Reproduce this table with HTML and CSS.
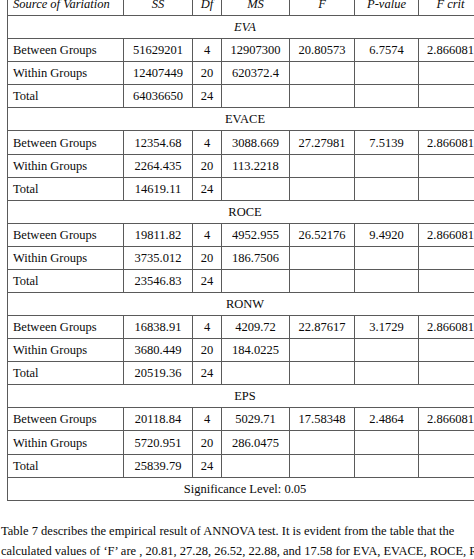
FILE: index.html
```html
<!DOCTYPE html>
<html>
<head>
<meta charset="utf-8">
<link rel="stylesheet" href="styles.css">
</head>
<body>
<div class="page">
  <table class="anova">
    <colgroup>
      <col class="c-src"><col class="c-ss"><col class="c-df"><col class="c-ms"><col class="c-f"><col class="c-p"><col class="c-fc">
    </colgroup>
    <thead>
      <tr class="head">
        <th class="src">Source of Variation</th><th>SS</th><th>Df</th><th>MS</th><th>F</th><th>P-value</th><th>F crit</th>
      </tr>
    </thead>
    <tbody>
      <tr><td colspan="7" class="sect it">EVA</td></tr>
      <tr><td class="src">Between Groups</td><td>51629201</td><td>4</td><td>12907300</td><td>20.80573</td><td>6.7574</td><td>2.866081</td></tr>
      <tr><td class="src">Within Groups</td><td>12407449</td><td>20</td><td>620372.4</td><td></td><td></td><td></td></tr>
      <tr><td class="src">Total</td><td>64036650</td><td>24</td><td></td><td></td><td></td><td></td></tr>

      <tr><td colspan="7" class="sect">EVACE</td></tr>
      <tr><td class="src">Between Groups</td><td>12354.68</td><td>4</td><td>3088.669</td><td>27.27981</td><td>7.5139</td><td>2.866081</td></tr>
      <tr><td class="src">Within Groups</td><td>2264.435</td><td>20</td><td>113.2218</td><td></td><td></td><td></td></tr>
      <tr><td class="src">Total</td><td>14619.11</td><td>24</td><td></td><td></td><td></td><td></td></tr>

      <tr><td colspan="7" class="sect">ROCE</td></tr>
      <tr><td class="src">Between Groups</td><td>19811.82</td><td>4</td><td>4952.955</td><td>26.52176</td><td>9.4920</td><td>2.866081</td></tr>
      <tr><td class="src">Within Groups</td><td>3735.012</td><td>20</td><td>186.7506</td><td></td><td></td><td></td></tr>
      <tr><td class="src">Total</td><td>23546.83</td><td>24</td><td></td><td></td><td></td><td></td></tr>

      <tr><td colspan="7" class="sect">RONW</td></tr>
      <tr><td class="src">Between Groups</td><td>16838.91</td><td>4</td><td>4209.72</td><td>22.87617</td><td>3.1729</td><td>2.866081</td></tr>
      <tr><td class="src">Within Groups</td><td>3680.449</td><td>20</td><td>184.0225</td><td></td><td></td><td></td></tr>
      <tr><td class="src">Total</td><td>20519.36</td><td>24</td><td></td><td></td><td></td><td></td></tr>

      <tr><td colspan="7" class="sect">EPS</td></tr>
      <tr><td class="src">Between Groups</td><td>20118.84</td><td>4</td><td>5029.71</td><td>17.58348</td><td>2.4864</td><td>2.866081</td></tr>
      <tr><td class="src">Within Groups</td><td>5720.951</td><td>20</td><td>286.0475</td><td></td><td></td><td></td></tr>
      <tr><td class="src">Total</td><td>25839.79</td><td>24</td><td></td><td></td><td></td><td></td></tr>

      <tr><td colspan="7" class="sect">Significance Level: 0.05</td></tr>
    </tbody>
  </table>
  <p class="text"><span class="line">Table 7 describes the empirical result of ANNOVA test. It is evident from the table that the</span><span class="line">calculated values of ‘F’ are , 20.81, 27.28, 26.52, 22.88, and 17.58 for EVA, EVACE, ROCE, RONW and EPS</span></p>
</div>
</body>
</html>
```

FILE: styles.css
```css
html, body {
  margin: 0;
  padding: 0;
  background: #ffffff;
  overflow: hidden;
}

.page {
  width: 474px;
  height: 559px;
  overflow: hidden;
  font-family: "Liberation Serif", "Times New Roman", serif;
  color: #0a0a0a;
}

.anova {
  border-collapse: collapse;
  table-layout: fixed;
  width: 475px;
  margin: -8px 0 0 7px;
  font-size: 12.5px;
}

.c-src { width: 116px; }
.c-ss { width: 69px; }
.c-df { width: 29px; }
.c-ms { width: 68px; }
.c-f { width: 65px; }
.c-p { width: 64px; }
.c-fc { width: 64px; }

.anova tr {
  height: 23.08px;
}

.anova th,
.anova td {
  border: 1px solid #5a5a5a;
  padding: 0 2px;
  text-align: center;
  vertical-align: middle;
  white-space: nowrap;
  line-height: 14px;
}

.anova th {
  font-weight: normal;
  font-style: italic;
}

.anova .src {
  text-align: left;
  padding-left: 5px;
}

.anova .sect {
  text-align: center;
}

.anova .it {
  font-style: italic;
}

.text {
  margin: 20px 0 0 1px;
  font-size: 12.5px;
  line-height: 20px;
}

.text .line {
  display: block;
  white-space: nowrap;
}
```
